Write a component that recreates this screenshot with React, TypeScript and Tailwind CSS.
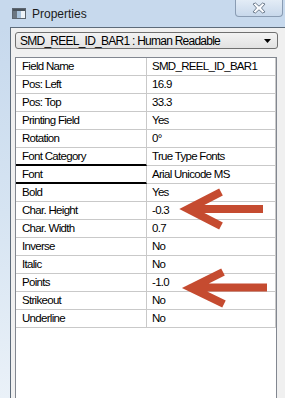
const rows: { label: string; value: string; rule?: boolean }[] = [
  { label: "Field Name", value: "SMD_REEL_ID_BAR1" },
  { label: "Pos: Left", value: "16.9" },
  { label: "Pos: Top", value: "33.3" },
  { label: "Printing Field", value: "Yes" },
  { label: "Rotation", value: "0°" },
  { label: "Font Category", value: "True Type Fonts", rule: true },
  { label: "Font", value: "Arial Unicode MS", rule: true },
  { label: "Bold", value: "Yes" },
  { label: "Char. Height", value: "-0.3" },
  { label: "Char. Width", value: "0.7" },
  { label: "Inverse", value: "No" },
  { label: "Italic", value: "No" },
  { label: "Points", value: "-1.0" },
  { label: "Strikeout", value: "No" },
  { label: "Underline", value: "No" },
];

function WindowIcon() {
  return (
    <svg width="14" height="11" viewBox="0 0 14 11" aria-hidden>
      <rect x="0.5" y="0.5" width="13" height="10" fill="#eef3f8" stroke="#5d6670" />
      <rect x="1" y="1" width="12" height="2" fill="#4a535c" />
      <rect x="1" y="3" width="4" height="7" fill="#6b7681" />
      <rect x="5" y="3" width="4" height="7" fill="#a9c3dc" />
    </svg>
  );
}

function CloseGlyph() {
  return (
    <svg width="16" height="12" viewBox="0 0 16 12" aria-hidden>
      <polygon
        points="2,2 4.5,1 8,4.2 11.5,1 14,2 10.5,6 14,10 11.5,11 8,7.8 4.5,11 2,10 5.5,6"
        fill="#fbfcfe"
        stroke="#6f7d8e"
        strokeWidth="1"
        strokeLinejoin="round"
      />
    </svg>
  );
}

export default function App() {
  return (
    <div className="relative w-[285px] h-[398px] overflow-hidden flex flex-col bg-[#c7d9ed] font-[family-name:'Liberation_Sans',Arial,sans-serif]">
      {/* Title bar */}
      <div className="h-[27px] shrink-0 flex items-start">
        <div className="h-[27px] flex items-center pl-[12px] gap-[6px]">
          <WindowIcon />
          <span className="text-[12px] leading-none text-[#1b1b1b]">Properties</span>
        </div>
        <div className="ml-auto mr-[2px] w-[48px] h-[17px] rounded-b-[4px] border border-t-0 border-[#8a9cb3] bg-linear-to-b from-[#e3ecf6] to-[#c8d8eb] flex items-center justify-center">
          <CloseGlyph />
        </div>
      </div>

      {/* Window body */}
      <div className="flex flex-1 min-h-0">
        <div className="w-[10px] shrink-0 bg-linear-to-b from-[#c7d9ed] via-[#d6e4f2] to-[#eaf1f8]" />
        <div className="flex-1 flex flex-col border-l border-t border-[#5d6b7a] bg-[#f0f0f0] pl-[4px] pt-[4px]">
          {/* Object selector */}
          <div className="w-[263px] h-[17px] shrink-0 flex items-center rounded-[3px] border border-[#707070] bg-linear-to-b from-[#f3f3f3] to-[#e2e2e2] pl-[4px] pr-[6px]">
            <span className="text-[12px] leading-none tracking-[-0.75px] text-black whitespace-nowrap">
              SMD_REEL_ID_BAR1 : Human Readable
            </span>
            <svg className="ml-auto" width="7" height="4" viewBox="0 0 7 4" aria-hidden>
              <path d="M0 0 H7 L3.5 4 Z" fill="#000" />
            </svg>
          </div>

          {/* Property grid */}
          <div className="mt-[8px] w-[262px] flex-1 border-l border-t border-r border-[#828790] bg-white text-[11.5px] tracking-[-0.7px] text-black">
            {rows.map((r) => (
              <div key={r.label} className="flex h-[18px]">
                <div
                  className={
                    r.rule
                      ? "w-[131px] shrink-0 pl-[6px] leading-[16px] border-r border-r-[#c9c9c9] border-b-2 border-b-black"
                      : "w-[131px] shrink-0 pl-[6px] leading-[17px] border-r border-r-[#c9c9c9] border-b border-b-[#c9c9c9]"
                  }
                >
                  {r.label}
                </div>
                <div className="flex-1 pl-[5px] leading-[17px] whitespace-nowrap border-b border-r border-[#c9c9c9]">{r.value}</div>
              </div>
            ))}
          </div>
        </div>
      </div>

      {/* Annotation arrows */}
      <svg className="absolute inset-0 pointer-events-none" width="285" height="398" viewBox="0 0 285 398" aria-hidden>
        <g stroke="#c54b30" strokeWidth="8" fill="none" strokeLinejoin="miter">
          <path d="M263 209 H192 M221 192 L188 209 L221 226" />
          <path d="M267 287.5 H196 M223 272 L191 288 L224 304" />
        </g>
      </svg>
    </div>
  );
}
